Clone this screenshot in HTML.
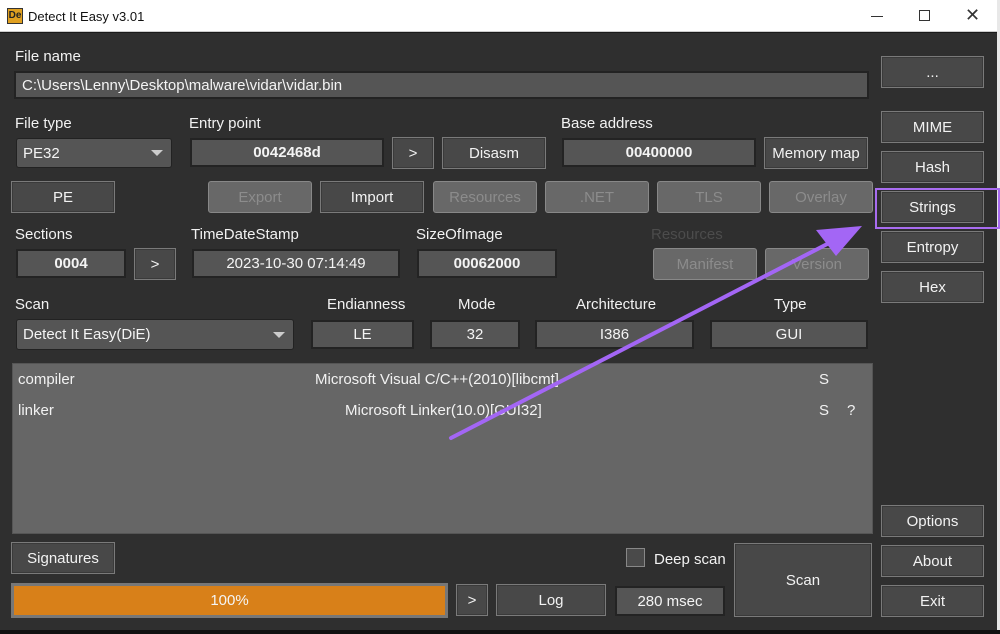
<!DOCTYPE html>
<html><head><meta charset="utf-8"><style>
*{box-sizing:border-box;margin:0;padding:0}
body{width:1000px;height:634px;background:#1a1a1a;position:relative;overflow:hidden;font-family:"Liberation Sans",sans-serif;font-size:15px;color:#f0f0f0}
.a{position:absolute}
.lbl{position:absolute;font-size:15px;color:#f2f2f2}
.btn{position:absolute;background:#484848;border:1px solid #7a7a7a;box-shadow:inset 0 0 0 1px #3a3a3a;display:flex;align-items:center;justify-content:center;color:#f2f2f2;font-size:15px}
.dis{position:absolute;background:#686868;border:1px solid #888;border-radius:3px;display:flex;align-items:center;justify-content:center;color:#8c8c8c;font-size:15px}
.fld{position:absolute;background:#555;border:2px solid #232323;display:flex;align-items:center;justify-content:center;color:#f4f4f4;font-size:15px}
.b{font-weight:bold}
</style></head><body>
<div class="a" style="left:0;top:0;width:997px;height:32px;background:#fff;border-bottom:1px solid #ccc"></div>
<div class="a" style="left:7px;top:8px;width:16px;height:16px;background:#e0a020;border:1px solid #333;font-size:10px;font-weight:bold;color:#222;line-height:14px;text-align:center">De</div>
<div class="a" style="left:28px;top:9px;font-size:13px;color:#111">Detect It Easy v3.01</div>
<div class="a" style="left:871px;top:16px;width:12px;height:1px;background:#333"></div>
<div class="a" style="left:919px;top:10px;width:11px;height:11px;border:1px solid #333"></div>
<div class="a" style="left:965px;top:5px;font-size:18px;color:#333">✕</div>
<div class="a" style="left:0;top:33px;width:997px;height:597px;background:#2f2f2f"></div>
<div class="a" style="left:997px;top:0;width:3px;height:634px;background:#e8e8e8"></div>
<div class="a" style="left:0;top:630px;width:1000px;height:4px;background:#111"></div>

<div class="lbl" style="left:15px;top:48px">File name</div>
<div class="fld" style="left:14px;top:71px;width:855px;height:28px;justify-content:flex-start;padding-left:6px">C:\Users\Lenny\Desktop\malware\vidar\vidar.bin</div>

<div class="lbl" style="left:15px;top:115px">File type</div>
<div class="lbl" style="left:189px;top:115px">Entry point</div>
<div class="lbl" style="left:561px;top:115px">Base address</div>
<div class="fld" style="left:16px;top:138px;width:156px;height:30px;justify-content:flex-start;padding-left:6px;border:1px solid #222;border-radius:3px">PE32<span style="position:absolute;right:8px;top:11px;border-left:6px solid transparent;border-right:6px solid transparent;border-top:6px solid #ccc"></span></div>
<div class="fld b" style="left:190px;top:138px;width:194px;height:29px">0042468d</div>
<div class="btn" style="left:392px;top:137px;width:42px;height:32px">&gt;</div>
<div class="btn" style="left:442px;top:137px;width:104px;height:32px">Disasm</div>
<div class="fld b" style="left:562px;top:138px;width:194px;height:29px">00400000</div>
<div class="btn" style="left:764px;top:137px;width:104px;height:32px">Memory map</div>

<div class="btn" style="left:11px;top:181px;width:104px;height:32px">PE</div>
<div class="dis" style="left:208px;top:181px;width:104px;height:32px">Export</div>
<div class="btn" style="left:320px;top:181px;width:104px;height:32px">Import</div>
<div class="dis" style="left:433px;top:181px;width:104px;height:32px">Resources</div>
<div class="dis" style="left:545px;top:181px;width:104px;height:32px">.NET</div>
<div class="dis" style="left:657px;top:181px;width:104px;height:32px">TLS</div>
<div class="dis" style="left:769px;top:181px;width:104px;height:32px">Overlay</div>

<div class="lbl" style="left:15px;top:226px">Sections</div>
<div class="lbl" style="left:191px;top:226px">TimeDateStamp</div>
<div class="lbl" style="left:416px;top:226px">SizeOfImage</div>
<div class="lbl" style="left:651px;top:226px;color:#4c4c4c">Resources</div>
<div class="fld b" style="left:16px;top:249px;width:110px;height:29px">0004</div>
<div class="btn" style="left:134px;top:248px;width:42px;height:32px">&gt;</div>
<div class="fld" style="left:192px;top:249px;width:208px;height:29px">2023-10-30 07:14:49</div>
<div class="fld b" style="left:417px;top:249px;width:140px;height:29px">00062000</div>
<div class="dis" style="left:653px;top:248px;width:104px;height:32px">Manifest</div>
<div class="dis" style="left:765px;top:248px;width:104px;height:32px">Version</div>

<div class="lbl" style="left:15px;top:296px">Scan</div>
<div class="lbl" style="left:327px;top:296px">Endianness</div>
<div class="lbl" style="left:458px;top:296px">Mode</div>
<div class="lbl" style="left:576px;top:296px">Architecture</div>
<div class="lbl" style="left:774px;top:296px">Type</div>
<div class="fld" style="left:16px;top:319px;width:278px;height:31px;justify-content:flex-start;padding-left:6px;border:1px solid #222;border-radius:3px">Detect It Easy(DiE)<span style="position:absolute;right:8px;top:12px;border-left:6px solid transparent;border-right:6px solid transparent;border-top:6px solid #ccc"></span></div>
<div class="fld" style="left:311px;top:320px;width:103px;height:29px">LE</div>
<div class="fld" style="left:430px;top:320px;width:90px;height:29px">32</div>
<div class="fld" style="left:535px;top:320px;width:159px;height:29px">I386</div>
<div class="fld" style="left:710px;top:320px;width:158px;height:29px">GUI</div>

<div class="a" style="left:12px;top:363px;width:861px;height:171px;background:#666;border:1px solid #555"></div>
<div class="lbl" style="left:18px;top:371px">compiler</div>
<div class="lbl" style="left:315px;top:371px">Microsoft Visual C/C++(2010)[libcmt]</div>
<div class="lbl" style="left:819px;top:371px">S</div>
<div class="lbl" style="left:18px;top:402px">linker</div>
<div class="lbl" style="left:345px;top:402px">Microsoft Linker(10.0)[GUI32]</div>
<div class="lbl" style="left:819px;top:402px">S</div>
<div class="lbl" style="left:847px;top:402px">?</div>

<div class="btn" style="left:11px;top:542px;width:104px;height:32px">Signatures</div>
<div class="a" style="left:626px;top:548px;width:19px;height:19px;background:#4a4a4a;border:1px solid #888"></div>
<div class="lbl" style="left:654px;top:551px">Deep scan</div>
<div class="btn" style="left:734px;top:543px;width:138px;height:74px">Scan</div>
<div class="a" style="left:11px;top:583px;width:437px;height:35px;background:#d88019;border:3px solid #777;display:flex;align-items:center;justify-content:center;color:#f4f4f4">100%</div>
<div class="btn" style="left:456px;top:584px;width:32px;height:32px">&gt;</div>
<div class="btn" style="left:496px;top:584px;width:110px;height:32px">Log</div>
<div class="fld" style="left:615px;top:586px;width:110px;height:30px">280 msec</div>

<div class="btn" style="left:881px;top:56px;width:103px;height:32px">...</div>
<div class="btn" style="left:881px;top:111px;width:103px;height:32px">MIME</div>
<div class="btn" style="left:881px;top:151px;width:103px;height:32px">Hash</div>
<div class="btn" style="left:881px;top:191px;width:103px;height:32px">Strings</div>
<div class="a" style="left:875px;top:188px;width:125px;height:41px;border:2px solid #a86cf0"></div>
<div class="btn" style="left:881px;top:231px;width:103px;height:32px">Entropy</div>
<div class="btn" style="left:881px;top:271px;width:103px;height:32px">Hex</div>
<div class="btn" style="left:881px;top:505px;width:103px;height:32px">Options</div>
<div class="btn" style="left:881px;top:545px;width:103px;height:32px">About</div>
<div class="btn" style="left:881px;top:585px;width:103px;height:32px">Exit</div>

<svg class="a" style="left:0;top:0" width="1000" height="634">
<line x1="451" y1="438" x2="835" y2="240" stroke="#a366f5" stroke-width="4" stroke-linecap="round"/>
<polygon points="862,226 816,230 836,256" fill="#a366f5"/>
</svg>
</body></html>
